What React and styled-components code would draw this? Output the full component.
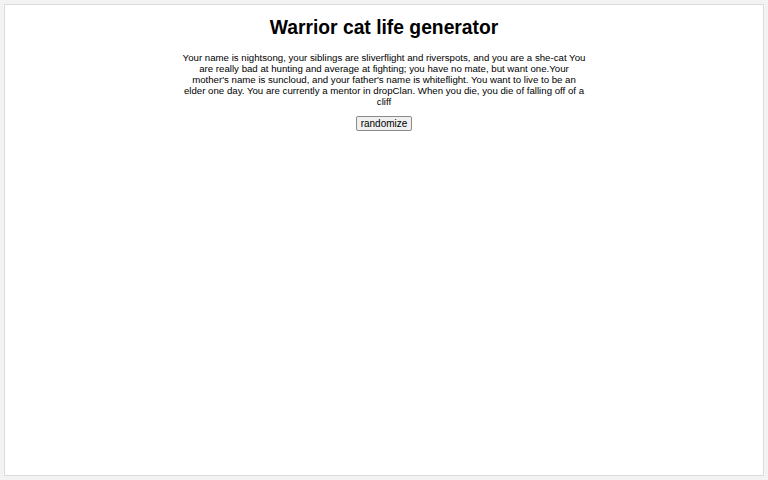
import React from "react";
import styled, { createGlobalStyle } from "styled-components";

const Global = createGlobalStyle`
  html, body { margin: 0; padding: 0; background: #f3f3f3; }
  body { font-family: "Liberation Sans", Arial, sans-serif; }
`;

const Page = styled.div`
  box-sizing: border-box;
  height: 480px;
  padding: 4px;
`;

const Panel = styled.main`
  box-sizing: border-box;
  height: 100%;
  background: #fff;
  border: 1px solid #dcdcdc;
  display: flex;
  flex-direction: column;
  align-items: center;
  padding-top: 12px;
`;

const Title = styled.h1`
  margin: 0;
  font-size: 19.3px;
  font-weight: bold;
  color: #000;
  line-height: 22px;
`;

const Story = styled.p`
  margin: 13px 0 0;
  width: 404px;
  font-size: 9.66px;
  line-height: 11px;
  text-align: center;
  color: #000;
`;

const Button = styled.button`
  margin-top: 9px;
  font-family: "Liberation Sans", Arial, sans-serif;
  font-size: 10px;
  line-height: 11px;
  padding: 1px 4px;
  background: #f0f0f0;
  border: 1px solid #8a8a8a;
  border-radius: 2px;
  color: #000;
`;

export default function App() {
  return (
    <>
      <Global />
      <Page>
        <Panel>
          <Title>Warrior cat life generator</Title>
          <Story>
            Your name is nightsong, your siblings are sliverflight and riverspots, and you are a she-cat You are really bad at hunting and average at fighting; you have no mate, but want one.Your mother's name is suncloud, and your father's name is whiteflight. You want to live to be an elder one day. You are currently a mentor in dropClan. When you die, you die of falling off of a cliff
          </Story>
          <Button>randomize</Button>
        </Panel>
      </Page>
    </>
  );
}
